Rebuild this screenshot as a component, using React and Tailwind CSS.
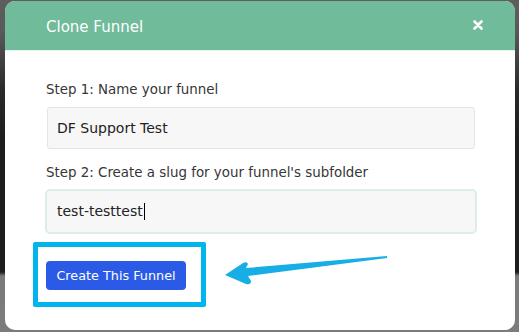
import React from 'react';

const font = { fontFamily: '"DejaVu Sans", "Open Sans", sans-serif' };

export default function App() {
  return (
    <div
      className="w-[519px] h-[332px] overflow-hidden pt-[1px] pl-[5px] bg-[linear-gradient(to_bottom,#5e5e5e_0px,#5a5a5a_30px,#2a2a2a_90px,#1d1d1d_140px,#1d1d1d_272px,#7a7a7a_276px,#7c7c7c_332px)]"
      style={font}
    >
      <div className="w-[510px] h-[329px] bg-white rounded-[10px] overflow-hidden flex flex-col">
        {/* header */}
        <div className="h-[50px] bg-[#6fbb9a] border-b border-[#e8f1ec] flex items-center justify-between pl-[41px] pr-[32px]">
          <span className="text-white text-[15px] mt-[3px]">Clone Funnel</span>
          <svg width="10" height="10" viewBox="0 0 10 10" className="mb-[1px]">
            <path d="M1.5 1.5 L8.5 8.5 M8.5 1.5 L1.5 8.5" stroke="white" strokeWidth="2.6" strokeLinecap="round" />
          </svg>
        </div>

        {/* body */}
        <div className="flex flex-col pl-[41px] pr-[38px] pt-[30px]">
          <label className="text-[13.4px] leading-[18px] text-[#363636]">Step 1: Name your funnel</label>
          <div className="mt-[8px] ml-[1px] h-[42px] w-[428px] bg-[#f7f7f7] border border-[#e3e3e3] rounded-[3px] flex items-center pl-[9px] text-[14px] text-[#222]">
            DF Support Test
          </div>

          <label className="mt-[15px] text-[13.4px] leading-[18px] text-[#363636]">
            Step 2: Create a slug for your funnel's subfolder
          </label>
          <div className="mt-[7px] -ml-[1px] h-[45px] w-[432px] rounded-[5px] border-[2px] border-[#dcefe6] bg-[#f7f7f7] flex items-center pl-[10px] text-[14px] text-[#222]">
            test-testtest
            <span className="inline-block w-[1px] h-[17px] bg-black ml-[1px]" />
          </div>

          <div className="mt-[8px] -ml-[13px] flex items-center">
            <div className="w-[173px] h-[65px] border-[5px] border-[#00b4ec] rounded-[2px] pl-[8px] pt-[14px]">
              <button className="w-[140px] h-[29px] bg-[#2b5be6] rounded-[4px] text-white text-[12.8px] flex items-center justify-center">
                Create This Funnel
              </button>
            </div>
            <svg width="170" height="34" viewBox="0 0 170 34" className="ml-[15px] mb-[6px]">
              <path
                d="M4 20 L22 8 Q26 6 27 9 L25 13 L166 1 L166 3 L27 21 L30 26 Q30 30 25 29 Z"
                fill="#17aee6"
              />
            </svg>
          </div>
        </div>
      </div>
    </div>
  );
}
